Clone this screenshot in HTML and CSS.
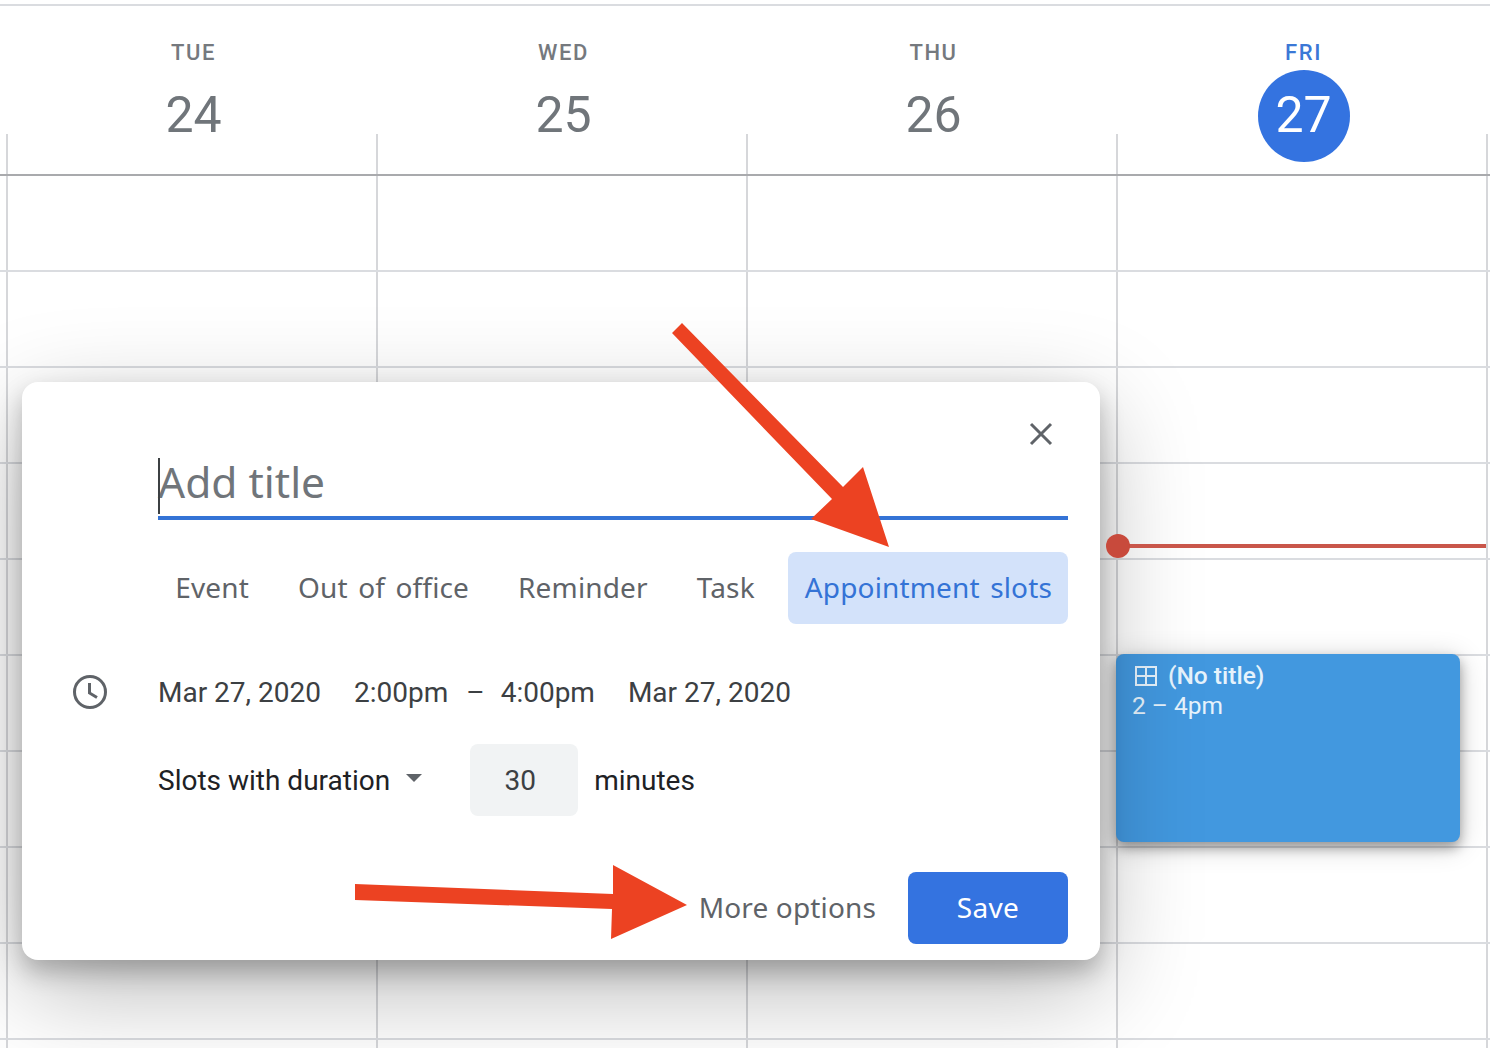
FILE: index.html
```html
<!DOCTYPE html>
<html lang="en">
<head>
    <meta charset="UTF-8">
    <meta name="viewport" content="width=device-width, initial-scale=1.0">
    <title>Calendar</title>
    <link rel="stylesheet" href="styles.css">
</head>
<body>
    <div class="week-head">
        <div class="day-col">
            <div class="day-name">TUE</div>
            <div class="day-num">24</div>
        </div>
        <div class="day-col">
            <div class="day-name">WED</div>
            <div class="day-num">25</div>
        </div>
        <div class="day-col">
            <div class="day-name">THU</div>
            <div class="day-num">26</div>
        </div>
        <div class="day-col today">
            <div class="day-name">FRI</div>
            <div class="day-num">27</div>
        </div>
        <div class="day-col"></div>
    </div>
    <div class="time-grid"></div>

    <!-- Current time marker -->
    <div class="now-line"><span class="now-dot"></span></div>

    <div class="event-chip">
        <div class="event-title">
            <svg class="event-icon" width="22" height="20" viewBox="0 0 22 20">
                <path d="M1 1h20v18H1zM1 10h20M11 1v18" fill="none" stroke="currentColor" stroke-width="2"/>
            </svg>
            (No title)
        </div>
        <div class="event-time">2 – 4pm</div>
    </div>

    <div class="dialog">
        <div class="dialog-close">
            <svg width="24" height="24" viewBox="0 0 24 24">
                <path d="M2 2l20 20M22 2L2 22" fill="none" stroke="#5f6368" stroke-width="3"/>
            </svg>
        </div>
        <div class="title-field">Add title</div>
        <div class="tabs">
            <div class="tab">Event</div>
            <div class="tab">Out of office</div>
            <div class="tab">Reminder</div>
            <div class="tab">Task</div>
            <div class="tab active">Appointment slots</div>
        </div>
        <div class="date-row">
            <svg class="clock" width="36" height="36" viewBox="0 0 36 36">
                <circle cx="18" cy="18" r="15.5" fill="none" stroke="#5f6368" stroke-width="3"/>
                <path d="M17.5 9v10l7.5 4.5" fill="none" stroke="#5f6368" stroke-width="3"/>
            </svg>
            <span class="date-a">Mar 27, 2020</span>
            <span class="date-b">2:00pm</span>
            <span class="date-dash">–</span>
            <span class="date-c">4:00pm</span>
            <span class="date-d">Mar 27, 2020</span>
        </div>
        <div class="slots-row">
            <span>Slots with duration</span>
            <span class="caret"></span>
            <div class="slot-input">30</div>
            <span>minutes</span>
        </div>
        <div class="dialog-foot">
            <div class="more-options">More options</div>
            <div class="save-btn">Save</div>
        </div>
    </div>

    <!-- Red annotation arrows -->
    <svg class="arrows" width="1490" height="1048" viewBox="0 0 1490 1048">
        <polygon fill="#ec4222" points="672,333 682,323 843,487 863,467 889,547 811,519 832,499"/>
        <polygon fill="#ec4222" points="355,884 613,894 613,865 687,905 611,939 612,909 355,900"/>
    </svg>
</body>
</html>
```

FILE: styles.css
```css
html, body {
    height: 100%;
}
body {
    margin: 0;
    font-family: Roboto, Arial, sans-serif;
    background-color: #fff;
    color: #3c4043;
    overflow: hidden;
    position: relative;
}

/* Week header */
.week-head {
    display: grid;
    grid-template-columns: repeat(4, 370px) 1fr;
    margin-top: 4px;
    padding-left: 6px;
    border-top: 2px solid #dadce0;
    height: 168px;
    box-shadow: 0 2px 0 #a9aaad;
}
.day-col {
    text-align: center;
    padding: 34px 0 0 5px;
    background: linear-gradient(#d6d7da, #d6d7da) left bottom / 2px 40px no-repeat;
}
.day-name {
    font-size: 22px;
    line-height: 26px;
    letter-spacing: 1.6px;
    font-weight: 500;
    color: #75797e;
}
.day-num {
    width: 92px;
    height: 92px;
    margin: 4px auto 0;
    border-radius: 50%;
    font-size: 50px;
    line-height: 90px;
    color: #70757a;
}
.today .day-name {
    color: #3b78d6;
}
.today .day-num {
    background-color: #3473e0;
    color: #fff;
}

/* Hour rows and day columns */
.time-grid {
    height: 874px;
    margin-top: 2px;
    background-image:
        repeating-linear-gradient(to bottom, transparent 0 94px, #dadce0 94px 96px),
        repeating-linear-gradient(to right, transparent 0 6px, #d6d7da 6px 8px, transparent 8px 370px);
}

.now-line {
    position: absolute;
    left: 1118px;
    top: 544px;
    width: 368px;
    height: 4px;
    background-color: #c9564a;
    z-index: 3;
}
.now-dot {
    position: absolute;
    left: -12px;
    top: -10px;
    width: 24px;
    height: 24px;
    border-radius: 50%;
    background-color: #c84a3c;
}

.event-chip {
    position: absolute;
    left: 1116px;
    top: 654px;
    width: 344px;
    height: 188px;
    box-sizing: border-box;
    padding: 7px 16px;
    border-radius: 8px;
    background-color: #4298df;
    color: #e6f3fc;
    font-size: 24.5px;
    line-height: 30px;
    box-shadow: 0 6px 12px rgba(0, 0, 0, 0.32), 0 4px 28px rgba(0, 0, 0, 0.2);
}
.event-title {
    display: flex;
    align-items: center;
    gap: 11px;
    font-weight: 500;
}
.event-icon {
    margin-left: 3px;
}

.dialog {
    position: absolute;
    left: 22px;
    top: 382px;
    width: 1078px;
    height: 578px;
    box-sizing: border-box;
    padding: 40px 32px 16px 136px;
    border-radius: 16px;
    background-color: #fff;
    box-shadow: 0 30px 100px rgba(0, 0, 0, 0.28), 0 12px 24px rgba(0, 0, 0, 0.24);
    z-index: 2;
}
.dialog-close {
    position: absolute;
    right: 47px;
    top: 40px;
    height: 24px;
}
.title-field {
    height: 98px;
    box-sizing: border-box;
    padding-top: 33px;
    border-bottom: 4px solid #3473d6;
    font-family: "Noto Sans", Arial, sans-serif;
    font-size: 42.5px;
    line-height: 54px;
    color: #70757a;
    position: relative;
}
/* Text cursor */
.title-field::before {
    content: "";
    position: absolute;
    left: 0;
    top: 36px;
    bottom: 2px;
    width: 2px;
    background-color: #3c4043;
}
.tabs {
    display: flex;
    justify-content: flex-end;
    gap: 17px;
    margin-top: 32px;
    white-space: nowrap;
}
.tab {
    height: 72px;
    padding: 0 16px;
    border-radius: 8px;
    font-family: "Noto Sans", Arial, sans-serif;
    font-size: 28px;
    letter-spacing: 0.15px;
    word-spacing: 3px;
    line-height: 70px;
    color: #5f6368;
}
.tab.active {
    padding-left: 17px;
    background-color: #d3e2fa;
    color: #3473d6;
}
.date-row {
    display: flex;
    align-items: center;
    height: 72px;
    margin-top: 32px;
    font-size: 28px;
    position: relative;
}
.clock {
    position: absolute;
    left: -86px;
    top: 18px;
}
.date-b {
    margin-left: 33px;
}
.date-dash {
    margin-left: 18px;
}
.date-c {
    margin-left: 16px;
}
.date-d {
    margin-left: 33px;
}
.slots-row {
    display: flex;
    align-items: center;
    height: 72px;
    margin-top: 16px;
    font-size: 28px;
    color: #202124;
}
.caret {
    width: 0;
    height: 0;
    margin: -4px 48px 0 16px;
    border-left: 8px solid transparent;
    border-right: 8px solid transparent;
    border-top: 8px solid #5f6368;
}
.slot-input {
    width: 108px;
    height: 72px;
    box-sizing: border-box;
    padding-right: 8px;
    margin-right: 16px;
    border-radius: 8px;
    background-color: #f1f3f4;
    text-align: center;
    line-height: 74px;
    color: #3c4043;
}
.dialog-foot {
    display: flex;
    justify-content: flex-end;
    align-items: center;
    gap: 32px;
    margin-top: 56px;
    font-family: "Noto Sans", Arial, sans-serif;
    font-size: 28px;
    letter-spacing: 0.3px;
}
.more-options {
    padding-bottom: 2px;
    color: #5f6368;
    letter-spacing: 0.15px;
}
.save-btn {
    width: 160px;
    height: 72px;
    border-radius: 8px;
    background-color: #3473e0;
    color: #fff;
    text-align: center;
    line-height: 70px;
}

.arrows {
    position: absolute;
    left: 0;
    top: 0;
    z-index: 3;
}
```
